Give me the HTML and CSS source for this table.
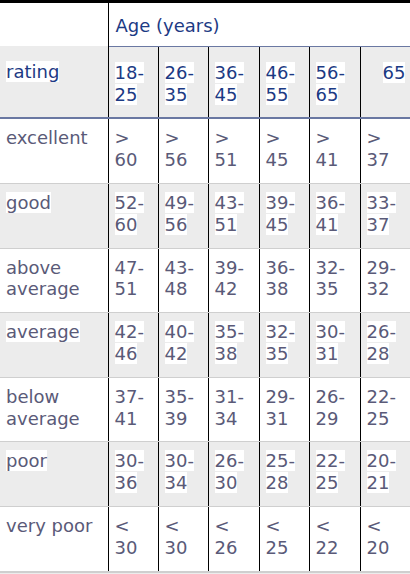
FILE: index.html
```html
<!DOCTYPE html>
<html>
<head>
<meta charset="utf-8">
<link rel="stylesheet" href="styles.css">
</head>
<body>
<div class="frame">
<table class="vo2">
  <colgroup>
    <col class="c-rating"><col class="c-age"><col class="c-age"><col class="c-age2"><col class="c-age"><col class="c-age2"><col class="c-last">
  </colgroup>
  <thead>
    <tr class="h1">
      <th class="blank"></th>
      <th class="age" colspan="6">Age (years)</th>
    </tr>
    <tr class="h2">
      <th class="lbl"><span class="hl">rating</span></th>
      <th><span class="hl">18-</span><br><span class="hl">25</span></th>
      <th><span class="hl">26-</span><br><span class="hl">35</span></th>
      <th><span class="hl">36-</span><br><span class="hl">45</span></th>
      <th><span class="hl">46-</span><br><span class="hl">55</span></th>
      <th><span class="hl">56-</span><br><span class="hl">65</span></th>
      <th class="plus"><span class="hl">65</span></th>
    </tr>
  </thead>
  <tbody>
    <tr>
      <td class="lbl"><span class="hl">excellent</span></td>
      <td><span class="hl">&gt;</span><br><span class="hl">60</span></td>
      <td><span class="hl">&gt;</span><br><span class="hl">56</span></td>
      <td><span class="hl">&gt;</span><br><span class="hl">51</span></td>
      <td><span class="hl">&gt;</span><br><span class="hl">45</span></td>
      <td><span class="hl">&gt;</span><br><span class="hl">41</span></td>
      <td><span class="hl">&gt;</span><br><span class="hl">37</span></td>
    </tr>
    <tr class="alt">
      <td class="lbl"><span class="hl">good</span></td>
      <td><span class="hl">52-</span><br><span class="hl">60</span></td>
      <td><span class="hl">49-</span><br><span class="hl">56</span></td>
      <td><span class="hl">43-</span><br><span class="hl">51</span></td>
      <td><span class="hl">39-</span><br><span class="hl">45</span></td>
      <td><span class="hl">36-</span><br><span class="hl">41</span></td>
      <td><span class="hl">33-</span><br><span class="hl">37</span></td>
    </tr>
    <tr>
      <td class="lbl"><span class="hl">above</span><br><span class="hl">average</span></td>
      <td><span class="hl">47-</span><br><span class="hl">51</span></td>
      <td><span class="hl">43-</span><br><span class="hl">48</span></td>
      <td><span class="hl">39-</span><br><span class="hl">42</span></td>
      <td><span class="hl">36-</span><br><span class="hl">38</span></td>
      <td><span class="hl">32-</span><br><span class="hl">35</span></td>
      <td><span class="hl">29-</span><br><span class="hl">32</span></td>
    </tr>
    <tr class="alt">
      <td class="lbl"><span class="hl">average</span></td>
      <td><span class="hl">42-</span><br><span class="hl">46</span></td>
      <td><span class="hl">40-</span><br><span class="hl">42</span></td>
      <td><span class="hl">35-</span><br><span class="hl">38</span></td>
      <td><span class="hl">32-</span><br><span class="hl">35</span></td>
      <td><span class="hl">30-</span><br><span class="hl">31</span></td>
      <td><span class="hl">26-</span><br><span class="hl">28</span></td>
    </tr>
    <tr>
      <td class="lbl"><span class="hl">below</span><br><span class="hl">average</span></td>
      <td><span class="hl">37-</span><br><span class="hl">41</span></td>
      <td><span class="hl">35-</span><br><span class="hl">39</span></td>
      <td><span class="hl">31-</span><br><span class="hl">34</span></td>
      <td><span class="hl">29-</span><br><span class="hl">31</span></td>
      <td><span class="hl">26-</span><br><span class="hl">29</span></td>
      <td><span class="hl">22-</span><br><span class="hl">25</span></td>
    </tr>
    <tr class="alt">
      <td class="lbl"><span class="hl">poor</span></td>
      <td><span class="hl">30-</span><br><span class="hl">36</span></td>
      <td><span class="hl">30-</span><br><span class="hl">34</span></td>
      <td><span class="hl">26-</span><br><span class="hl">30</span></td>
      <td><span class="hl">25-</span><br><span class="hl">28</span></td>
      <td><span class="hl">22-</span><br><span class="hl">25</span></td>
      <td><span class="hl">20-</span><br><span class="hl">21</span></td>
    </tr>
    <tr class="last">
      <td class="lbl"><span class="hl">very poor</span></td>
      <td><span class="hl">&lt;</span><br><span class="hl">30</span></td>
      <td><span class="hl">&lt;</span><br><span class="hl">30</span></td>
      <td><span class="hl">&lt;</span><br><span class="hl">26</span></td>
      <td><span class="hl">&lt;</span><br><span class="hl">25</span></td>
      <td><span class="hl">&lt;</span><br><span class="hl">22</span></td>
      <td><span class="hl">&lt;</span><br><span class="hl">20</span></td>
    </tr>
  </tbody>
</table>
</div>
</body>
</html>
```

FILE: styles.css
```css
html, body {
  margin: 0;
  padding: 0;
  background: #ececec;
  overflow: hidden;
}

.frame {
  width: 410px;
  height: 574px;
  overflow: hidden;
  border-top: 3px solid #000;
  box-sizing: border-box;
  background: #ececec;
}

.vo2 {
  border-collapse: collapse;
  table-layout: fixed;
  width: 430px;
  font-family: "DejaVu Sans", Verdana, sans-serif;
  font-size: 18px;
  line-height: 21.8px;
  color: #5a5a78;
}

.c-rating { width: 108px; }
.c-age { width: 50px; }
.c-age2 { width: 51px; }
.c-last { width: 70px; }

.vo2 th,
.vo2 td {
  text-align: left;
  vertical-align: top;
  font-weight: normal;
  border-left: 1px solid #000;
  border-right: 1px solid #000;
  border-bottom: 1px solid #cfcfcf;
  padding: 8px 6px 12px 6px;
  white-space: nowrap;
}

.vo2 .lbl {
  border-left: none;
}

.hl {
  background: #fff;
}

/* header row 1 */
.h1 th {
  background: #fff;
  color: #1c3a84;
  padding: 12px 6px 9px 7px;
}
.h1 .blank {
  border-left: none;
  border-bottom: none;
}
.h1 .age {
  border-bottom: 1px solid #6a78a2;
}

/* header row 2 */
.h2 th {
  background: #ececec;
  color: #1c3a84;
  padding: 15px 6px 12px 6px;
  border-bottom: 2px solid #6a78a2;
}
.h2 th.lbl {
  padding-left: 6px;
}
.h2 th.plus {
  padding-left: 22px;
}

/* body rows */
tbody tr td {
  background: #fff;
}
tbody tr.alt td {
  background: #ececec;
}
tbody td.lbl {
  padding-left: 6px;
}
tbody tr.last td {
  border-bottom: 2px solid #cfcfcf;
}
```
